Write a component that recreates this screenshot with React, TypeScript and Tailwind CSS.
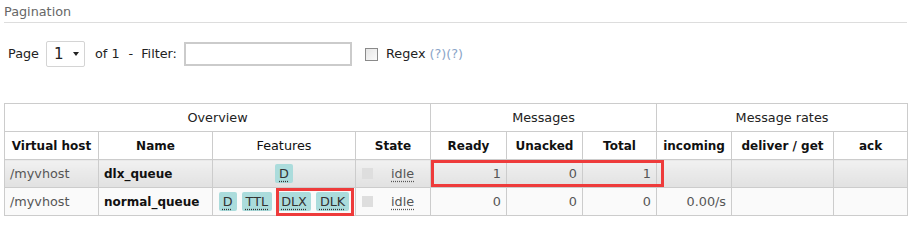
import React from "react";

function Badge({ t }: { t: string }) {
  return (
    <span className="inline-flex items-center h-[19px] px-[4px] rounded-[2px] bg-[#abdcdc] text-[#333]">
      <span className="underline decoration-dotted underline-offset-[3px] decoration-[#333]">{t}</span>
    </span>
  );
}

function State() {
  return (
    <div className="flex items-center">
      <span className="inline-block w-[11px] h-[11px] bg-[#dedede] ml-[1px]" />
      <span className="ml-[18px] text-[#555] underline decoration-dotted underline-offset-[3px]">idle</span>
    </div>
  );
}

export default function App() {
  const th = "border border-[#cccccc] h-[28px] p-0 text-center";
  const td = "border border-[#cccccc] h-[28px] py-0 px-[5px]";
  const r1 = "bg-linear-to-b from-[#f1f1f1] to-[#e1e1e1]";
  const r2 = "bg-[#fafafa]";
  return (
    <div className="relative w-[911px] h-[229px] bg-white overflow-hidden font-['DejaVu_Sans',Verdana,sans-serif] text-[12.8px] text-[#484848]">
      <div className="pl-[4px] pt-[4px]">
        <div className="w-[903px] text-[#666] leading-[16px] pb-[2px] border-b border-[#dddddd]">
          Pagination
        </div>
        <div className="flex items-center h-[26px] mt-[18px] ml-[4px] text-[#222]">
          <span>Page</span>
          <div className="ml-[7px] w-[39px] h-[26px] border border-[#d4d4d4] rounded-[2px] flex items-center bg-white">
            <span className="ml-[7px] text-[15px] leading-none text-[#222]">1</span>
            <span className="ml-[9px] w-0 h-0 border-l-[3px] border-r-[3px] border-t-[4px] border-l-transparent border-r-transparent border-t-[#222]" />
          </div>
          <span className="ml-[10px]">of 1</span>
          <span className="ml-[9px]">-</span>
          <span className="ml-[8px]">Filter:</span>
          <div className="ml-[7px] w-[168px] h-[24px] border-2 border-[#cbcbcb] bg-white" />
          <span className="ml-[13px] w-[13px] h-[13px] border border-[#8a8a8a] bg-linear-to-br from-[#e6e6e6] to-[#fafafa]" />
          <span className="ml-[8px]">Regex</span>
          <span className="ml-[4px] text-[#8aa4c8]">(?)(?)</span>
        </div>
        <table className="mt-[36px] table-fixed border-collapse w-[903px]">
          <colgroup>
            <col className="w-[94px]" />
            <col className="w-[114px]" />
            <col className="w-[143px]" />
            <col className="w-[75px]" />
            <col className="w-[76px]" />
            <col className="w-[76px]" />
            <col className="w-[74px]" />
            <col className="w-[75px]" />
            <col className="w-[102px]" />
            <col className="w-[74px]" />
          </colgroup>
          <thead>
            <tr className="text-[#222]">
              <th colSpan={4} className={`${th} font-normal`}>Overview</th>
              <th colSpan={3} className={`${th} font-normal`}>Messages</th>
              <th colSpan={3} className={`${th} font-normal`}>Message rates</th>
            </tr>
            <tr className="text-[#111]">
              <th className={`${th} font-bold text-[12px]`}>Virtual host</th>
              <th className={`${th} font-bold text-[12px]`}>Name</th>
              <th className={`${th} font-normal`}>Features</th>
              <th className={`${th} font-bold text-[12px]`}>State</th>
              <th className={`${th} font-bold text-[12px]`}>Ready</th>
              <th className={`${th} font-bold text-[12px]`}>Unacked</th>
              <th className={`${th} font-bold text-[12px]`}>Total</th>
              <th className={`${th} font-bold text-[12px]`}>incoming</th>
              <th className={`${th} font-bold text-[12px]`}>deliver / get</th>
              <th className={`${th} font-bold text-[12px]`}>ack</th>
            </tr>
          </thead>
          <tbody>
            <tr>
              <td className={`${td} ${r1} text-[#555]`}>/myvhost</td>
              <td className={`${td} ${r1} font-bold text-[12px] text-[#111]`}>dlx_queue</td>
              <td className={`${td} ${r1}`}>
                <div className="flex justify-center gap-[5px]">
                  <Badge t="D" />
                </div>
              </td>
              <td className={`${td} ${r1}`}><State /></td>
              <td className={`${td} ${r1} text-right text-[#555]`}>1</td>
              <td className={`${td} ${r1} text-right text-[#555]`}>0</td>
              <td className={`${td} ${r1} text-right text-[#555]`}>1</td>
              <td className={`${td} ${r1}`}></td>
              <td className={`${td} ${r1}`}></td>
              <td className={`${td} ${r1}`}></td>
            </tr>
            <tr>
              <td className={`${td} ${r2} text-[#555]`}>/myvhost</td>
              <td className={`${td} ${r2} font-bold text-[12px] text-[#111]`}>normal_queue</td>
              <td className={`${td} ${r2}`}>
                <div className="flex justify-center gap-[5px]">
                  <Badge t="D" />
                  <Badge t="TTL" />
                  <Badge t="DLX" />
                  <Badge t="DLK" />
                </div>
              </td>
              <td className={`${td} ${r2}`}><State /></td>
              <td className={`${td} ${r2} text-right text-[#555]`}>0</td>
              <td className={`${td} ${r2} text-right text-[#555]`}>0</td>
              <td className={`${td} ${r2} text-right text-[#555]`}>0</td>
              <td className={`${td} ${r2} text-right text-[#555]`}>0.00/s</td>
              <td className={`${td} ${r2}`}></td>
              <td className={`${td} ${r2}`}></td>
            </tr>
          </tbody>
        </table>
      </div>
      <div className="absolute left-[431px] top-[160px] w-[233px] h-[27px] border-[3px] border-[#ee3b3b] pointer-events-none" />
      <div className="absolute left-[276px] top-[188px] w-[78px] h-[28px] border-[3px] border-[#ee3b3b] pointer-events-none" />
    </div>
  );
}
